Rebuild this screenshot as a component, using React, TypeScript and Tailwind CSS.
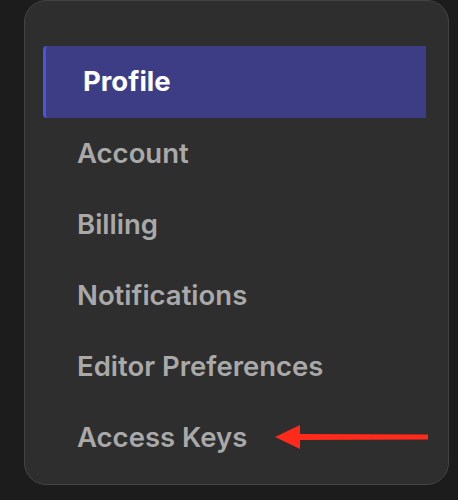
const items = [
  "Account",
  "Billing",
  "Notifications",
  "Editor Preferences",
  "Access Keys",
];

export default function App() {
  return (
    <div className="h-[500px] w-[458px] bg-[#1c1c1c] font-['Inter',sans-serif]">
      <div className="ml-[24px] h-[485px] w-[425px] rounded-[22px] border border-[#434343] bg-[#2e2e2e] pt-[45px] pl-[18px] pr-[22px]">
        {/* Active item */}
        <div className="flex h-[72px] items-center rounded-l-[4px] border-l-[3px] border-[#4a56d8] bg-[#3d3d86] pl-[37px] text-[27.5px] font-bold text-white">
          Profile
        </div>
        {items.map((label) => (
          <div
            key={label}
            className="relative flex h-[71px] items-center pl-[34px] text-[27.5px] font-semibold text-[#a9a9a9]"
          >
            {label}
            {label === "Access Keys" && (
              <svg
                className="absolute left-[232px] top-[22px]"
                width="156"
                height="26"
                viewBox="0 0 156 26"
              >
                <path d="M0 13 L25 1 L25 10 L153 10.5 L153 15.5 L25 16 L25 25 Z" fill="#ff2a1a" />
              </svg>
            )}
          </div>
        ))}
      </div>
    </div>
  );
}
